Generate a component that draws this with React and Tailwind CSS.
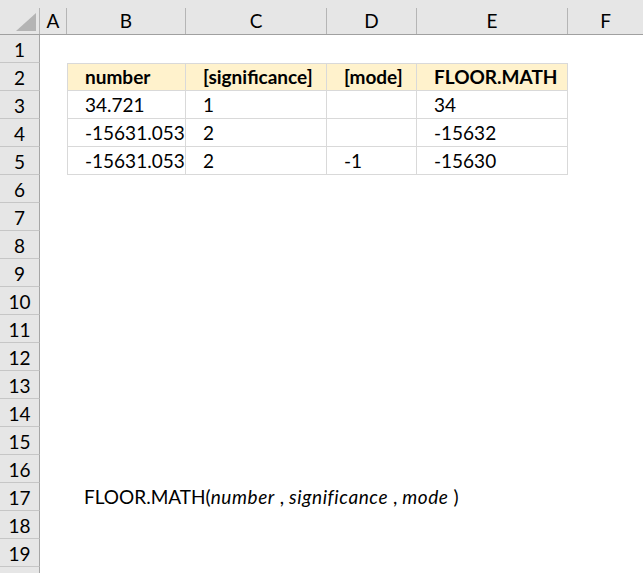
import React from 'react'

const cols = ['A', 'B', 'C', 'D', 'E', 'F']
const widths = ['w-[27px]', 'w-[119px]', 'w-[141px]', 'w-[90px]', 'w-[151px]', 'flex-1']

const table = {
  2: ['number', '[significance]', '[mode]', 'FLOOR.MATH'],
  3: ['34.721', '1', '', '34'],
  4: ['-15631.053', '2', '', '-15632'],
  5: ['-15631.053', '2', '-1', '-15630'],
}

function Cell({row, col, children}) {
  // table lives in B2:E5
  const inTable = table[row] && col >= 1 && col <= 4
  let cls = 'h-full flex items-center pl-[17px] pt-[1px] whitespace-nowrap overflow-visible '
  if (inTable) {
    cls += 'border-r border-b border-[#d9d9d9] '
    if (col === 1) cls += 'border-l '
    if (row === 2) cls += 'border-t bg-[#fff2cc] font-bold '
  }
  return <div className={widths[col] + ' shrink-0 h-full'}><div className={cls}>{children}</div></div>
}

function Row({n}) {
  return (
    <div className="flex h-[28px]">
      <div className="w-[40px] shrink-0 h-full bg-[#e6e6e6] border-r border-r-[#a6a6a6] border-b border-b-[#c6c6c6] flex items-center justify-center pt-[3px]">
        {n <= 19 ? n : null}
      </div>
      {cols.map((c, i) => (
        <Cell key={c} row={n} col={i}>
          {table[n] && i >= 1 && i <= 4 ? table[n][i - 1] : null}
          {n === 17 && i === 1 ? (
            <span>
              FLOOR.MATH(<i className="tracking-[0.6px]">number</i> , <i className="tracking-[0.6px]">significance</i> , <i className="tracking-[0.6px]">mode</i> )
            </span>
          ) : null}
        </Cell>
      ))}
    </div>
  )
}

export default function App() {
  const rows = Array.from({length: 20}, (_, i) => i + 1)
  return (
    <div className="w-[643px] h-[573px] overflow-hidden bg-white text-black text-[19px]" style={{fontFamily: 'Lato, "Open Sans", sans-serif'}}>
      {/* column header */}
      <div className="flex h-[35px] bg-[#e6e6e6] border-b border-[#a0a0a0] items-end">
        <div className="w-[40px] shrink-0 h-[26px] border-r border-[#b5b5b5] relative">
          <svg className="absolute left-[16px] top-[5px]" width="20" height="18" viewBox="0 0 20 18">
            <polygon points="20,0 20,18 0,18" fill="#b4b4b4" />
          </svg>
        </div>
        {cols.map((c, i) => (
          <div key={c} className={widths[i] + ' shrink-0 h-[26px] flex items-center justify-center ' + (i < 5 ? 'border-r border-[#b5b5b5]' : '')}>
            {c}
          </div>
        ))}
      </div>
      {rows.map(n => <Row key={n} n={n} />)}
    </div>
  )
}
